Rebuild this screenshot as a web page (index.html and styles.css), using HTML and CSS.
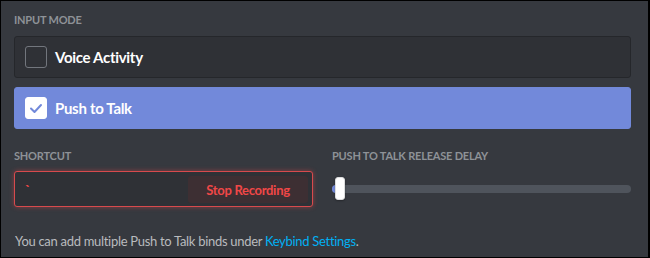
FILE: index.html
```html
<!DOCTYPE html>
<html lang="en">
<head>
<meta charset="UTF-8">
<meta name="viewport" content="width=device-width, initial-scale=1.0">
<title>Voice Settings</title>
<link rel="stylesheet" href="styles.css">
</head>
<body>
<div class="frame">
  <h5 class="label">Input Mode</h5>
  <div class="radio-item">
    <span class="checkbox"></span>
    <span class="radio-text">Voice Activity</span>
  </div>
  <div class="radio-item selected">
    <span class="checkbox checked">
      <svg width="22" height="22" viewBox="0 0 22 22"><polyline points="6,11.5 9.5,15 16,8" fill="none" stroke="#7289da" stroke-width="2" stroke-linecap="round" stroke-linejoin="round"/></svg>
    </span>
    <span class="radio-text">Push to Talk</span>
  </div>

  <div class="columns">
    <div class="column">
      <h5 class="label">Shortcut</h5>
      <div class="keybind recording">
        <span class="keybind-value">`</span>
        <button class="keybind-button">Stop Recording</button>
      </div>
    </div>
    <div class="column">
      <h5 class="label">Push to Talk Release Delay</h5>
      <div class="slider">
        <div class="slider-track">
          <div class="slider-fill"></div>
        </div>
        <div class="slider-grabber"></div>
      </div>
    </div>
  </div>

  <p class="note">You can add multiple Push to Talk binds under <a href="#">Keybind Settings</a>.</p>
</div>
</body>
</html>
```

FILE: styles.css
```css
body {
  margin: 0;
  padding: 0;
  background-color: #000;
  font-family: Lato, "Open Sans", sans-serif;
}

.frame {
  width: 650px;
  height: 258px;
  box-sizing: border-box;
  border-top: 1px solid #000;
  border-left: 1px solid #000;
  border-bottom: 1px solid #000;
  border-right: 2px solid #000;
  background-color: #36393f;
  padding: 11px 17px 0 13px;
  overflow: hidden;
}

.label {
  margin: 0 0 8px 0;
  font-size: 11px;
  line-height: 16px;
  font-weight: 700;
  text-transform: uppercase;
  letter-spacing: -0.2px;
  color: #8e9297;
}

.radio-item {
  display: flex;
  align-items: center;
  height: 42px;
  box-sizing: border-box;
  padding: 0 10px;
  margin-bottom: 9px;
  background-color: #2f3136;
  border: 1px solid #25272b;
  border-radius: 3px;
}

.radio-item.selected {
  background-color: #7289da;
  border-color: #7289da;
}

.checkbox {
  width: 22px;
  height: 22px;
  box-sizing: border-box;
  border: 1px solid #72767d;
  border-radius: 3px;
  margin-right: 8px;
  display: flex;
}

.checkbox.checked {
  background-color: #fff;
  border-color: #fff;
}

.checkbox.checked svg {
  margin: -1px;
}

.radio-text {
  font-size: 15px;
  font-weight: 700;
  letter-spacing: -0.3px;
  color: #fff;
}

.columns {
  display: grid;
  grid-template-columns: 299px 299px;
  column-gap: 19px;
  margin-top: 19px;
}

.columns .label {
  margin-bottom: 7px;
}

.keybind {
  height: 36px;
  box-sizing: border-box;
  display: flex;
  align-items: center;
  justify-content: space-between;
  padding: 0 4px 0 10px;
  background-color: #2f3136;
  border: 1px solid #25272b;
  border-radius: 3px;
}

.keybind.recording {
  border-color: #d84a4d;
  box-shadow: 0 0 5px rgba(240, 71, 71, 0.45);
}

.keybind-value {
  color: #f04747;
  font-size: 14px;
  font-weight: 700;
}

.keybind-button {
  width: 120px;
  height: 27px;
  margin-top: 1px;
  border: none;
  border-radius: 3px;
  background-color: #3d2f33;
  color: #f04747;
  font-family: inherit;
  font-size: 13px;
  font-weight: 700;
  letter-spacing: -0.3px;
  padding: 0;
}

.slider {
  position: relative;
  height: 36px;
  display: flex;
  align-items: center;
}

.slider-track {
  width: 100%;
  height: 8px;
  border-radius: 4px;
  background-color: #4f545c;
  overflow: hidden;
}

.slider-fill {
  width: 6px;
  height: 100%;
  background-color: #7289da;
}

.slider-grabber {
  position: absolute;
  left: 3px;
  top: 6px;
  width: 10px;
  height: 23px;
  box-sizing: border-box;
  background-color: #fff;
  border: 1px solid #dcddde;
  border-radius: 3px;
  box-shadow: 0 1px 2px rgba(0, 0, 0, 0.3);
}

.note {
  margin: 25px 0 0 1px;
  font-size: 13px;
  line-height: 18px;
  letter-spacing: -0.3px;
  color: #b9bbbe;
}

.note a {
  color: #00b0f4;
  text-decoration: none;
}
```
